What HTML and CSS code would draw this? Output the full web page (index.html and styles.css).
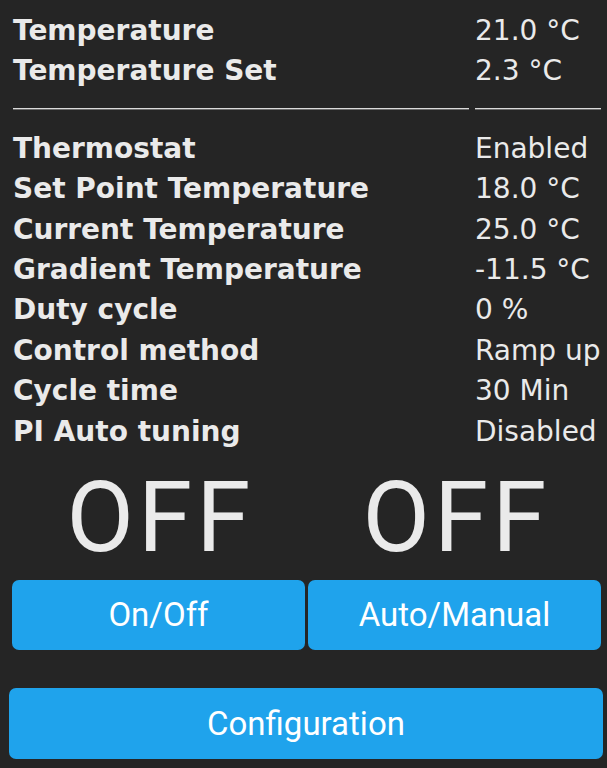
FILE: index.html
```html
<!DOCTYPE html>
<html lang="en">
<head>
    <meta charset="UTF-8">
    <meta name="viewport" content="width=device-width, initial-scale=1.0">
    <title>Thermostat</title>
    <link rel="stylesheet" href="styles.css">
</head>
<body>
    <div class="container">
        <div class="sensors">
            <div class="label">Temperature</div><div class="value">21.0 °C</div>
            <div class="label">Temperature Set</div><div class="value">2.3 °C</div>
            <div class="sep"><hr></div><div class="sep"><hr></div>
            <div class="label">Thermostat</div><div class="value">Enabled</div>
            <div class="label">Set Point Temperature</div><div class="value">18.0 °C</div>
            <div class="label">Current Temperature</div><div class="value">25.0 °C</div>
            <div class="label">Gradient Temperature</div><div class="value">-11.5 °C</div>
            <div class="label">Duty cycle</div><div class="value">0 %</div>
            <div class="label">Control method</div><div class="value">Ramp up</div>
            <div class="label">Cycle time</div><div class="value">30 Min</div>
            <div class="label">PI Auto tuning</div><div class="value">Disabled</div>
        </div>

        <div class="states">
            <div class="state">OFF</div>
            <div class="state">OFF</div>
        </div>

        <div class="toggles">
            <button class="btn">On/Off</button>
            <button class="btn">Auto/Manual</button>
        </div>

        <button class="btn btn-wide">Configuration</button>
    </div>
</body>
</html>
```

FILE: styles.css
```css
body {
    margin: 0;
    padding: 0;
    background-color: #252525;
    color: #eaeaea;
    font-family: "DejaVu Sans", Verdana, sans-serif;
}
.container {
    padding: 11px 4px 0 9px;
}
.sensors {
    display: grid;
    grid-template-columns: 1fr 126px;
    column-gap: 6px;
    padding: 0 2px 0 4px;
    font-size: 28px;
    line-height: 40.4px;
}
.label {
    font-weight: bold;
    white-space: nowrap;
}
.value {
    white-space: nowrap;
}
.sep {
    height: 37px;
}
.sep hr {
    margin: 16px 0 0 0;
    border: none;
    border-top: 1px solid #dadada;
    border-bottom: 1px solid #6a6a6a;
    height: 0;
}
.states {
    display: grid;
    grid-template-columns: 1fr 1fr;
    column-gap: 3px;
    padding: 0 2px 0 3px;
    margin-top: 8px;
    font-family: Roboto, "Liberation Sans", sans-serif;
    font-size: 98px;
    line-height: 115px;
    text-align: center;
}
.state {
    letter-spacing: 4px;
    text-indent: 4px; /* balance the trailing letter-spacing */
}
.toggles {
    display: grid;
    grid-template-columns: 1fr 1fr;
    column-gap: 3px;
    padding: 0 2px 0 3px;
    margin-top: 5px;
}
.btn {
    display: block;
    width: 100%;
    height: 70px;
    padding: 0;
    border: none;
    border-radius: 7px;
    background-color: #1fa3ec;
    color: #fff;
    font-family: Roboto, "Liberation Sans", sans-serif;
    font-size: 33px;
    line-height: 70px;
    cursor: pointer;
}
.btn-wide {
    height: 71px;
    margin-top: 38px;
}
```
